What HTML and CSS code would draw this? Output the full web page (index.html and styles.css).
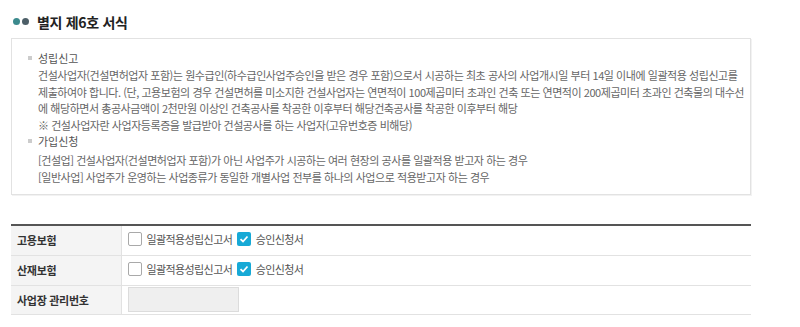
FILE: index.html
```html
<!DOCTYPE html>
<html lang="ko">
<head>
<meta charset="utf-8">
<link rel="stylesheet" href="styles.css">
</head>
<body>
<div class="page">
  <h2 class="title"><span class="dots"><i class="d1"></i><i class="d2"></i></span>별지 제6호 서식</h2>
  <div class="infobox">
    <div class="item">
      <div class="item-head">성립신고</div>
      <p class="item-body">건설사업자(건설면허업자 포함)는 원수급인(하수급인사업주승인을 받은 경우 포함)으로서 시공하는 최초 공사의 사업개시일 부터 14일 이내에 일괄적용 성립신고를<br>제출하여야 합니다. (단, 고용보험의 경우 건설면허를 미소지한 건설사업자는 연면적이 100제곱미터 초과인 건축 또는 연면적이 200제곱미터 초과인 건축물의 대수선<br>에 해당하면서 총공사금액이 2천만원 이상인 건축공사를 착공한 이후부터 해당건축공사를 착공한 이후부터 해당<br>※ 건설사업자란 사업자등록증을 발급받아 건설공사를 하는 사업자(고유번호증 비해당)</p>
    </div>
    <div class="item">
      <div class="item-head">가입신청</div>
      <p class="item-body spaced">[건설업] 건설사업자(건설면허업자 포함)가 아닌 사업주가 시공하는 여러 현장의 공사를 일괄적용 받고자 하는 경우<br>[일반사업] 사업주가 운영하는 사업종류가 동일한 개별사업 전부를 하나의 사업으로 적용받고자 하는 경우</p>
    </div>
  </div>
  <table class="form">
    <tr>
      <th>고용보험</th>
      <td>
        <label class="chk"><span class="box"></span>일괄적용성립신고서</label>
        <label class="chk"><span class="box on"><svg viewBox="0 0 14 14" width="14" height="14"><path d="M3.5 7.2 L6 9.5 L10.5 4.5" fill="none" stroke="#fff" stroke-width="1.8"/></svg></span>승인신청서</label>
      </td>
    </tr>
    <tr>
      <th>산재보험</th>
      <td>
        <label class="chk"><span class="box"></span>일괄적용성립신고서</label>
        <label class="chk"><span class="box on"><svg viewBox="0 0 14 14" width="14" height="14"><path d="M3.5 7.2 L6 9.5 L10.5 4.5" fill="none" stroke="#fff" stroke-width="1.8"/></svg></span>승인신청서</label>
      </td>
    </tr>
    <tr>
      <th>사업장 관리번호</th>
      <td><span class="input"></span></td>
    </tr>
  </table>
</div>
</body>
</html>
```
FILE: styles.css
```css
* { box-sizing: border-box; }
body {
  margin: 0;
  background: #fff;
  font-family: "Noto Sans CJK KR", "Noto Sans", sans-serif;
  color: #666;
}
.page {
  width: 751px;
  padding: 11px 0 0 11px;
}
.title {
  margin: 0 0 6px 0;
  display: flex;
  align-items: center;
  font-size: 14px;
  font-weight: bold;
  color: #222;
  height: 21px;
  letter-spacing: -0.3px;
}
.dots {
  display: flex;
  gap: 2px;
  margin: 0 8px 0 2px;
}
.dots i {
  display: block;
  width: 7px;
  height: 7px;
  border-radius: 50%;
}
.d1 { background: #3b8a8d; }
.d2 { background: #4d5f68; }
.infobox {
  border: 1px solid #e2e2e2;
  box-shadow: 1px 1px 0 #f2f2f2;
  padding: 11px 16px 7px 16px;
  height: 157px;
}
.item-head {
  position: relative;
  padding-left: 10px;
  font-size: 11px;
  line-height: 16px;
  color: #555;
}
.item-head::before {
  content: "";
  position: absolute;
  left: 0;
  top: 6px;
  width: 4px;
  height: 4px;
  background: #ccc;
}
.item-body {
  margin: 1px 0 0 10px;
  font-size: 11px;
  line-height: 16.6px;
  color: #666;
  white-space: nowrap;
  letter-spacing: -0.45px;
}
.item-body.spaced { margin-top: 3px; }
.form {
  margin-top: 29px;
  width: 740px;
  border-collapse: collapse;
  border-top: 2px solid #555;
  font-size: 11px;
}
.form th {
  width: 110px;
  background: #f4f4f4;
  text-align: left;
  padding: 0 0 0 6px;
  height: 30px;
  font-weight: bold;
  color: #333;
  border-bottom: 1px solid #e2e2e2;
  border-right: 1px solid #e2e2e2;
  letter-spacing: -0.3px;
}
.form tr:nth-child(3) th { height: 29px; }
.form td {
  padding: 0 0 0 6px;
  border-bottom: 1px solid #e2e2e2;
  color: #555;
  letter-spacing: -0.6px;
}
.chk {
  display: inline-flex;
  align-items: center;
  margin-right: 2px;
}
.box {
  display: inline-block;
  width: 14px;
  height: 14px;
  border: 1px solid #a9a9a9;
  border-radius: 2px;
  margin-right: 5px;
  background: #fff;
}
.box.on {
  border: none;
  background: #17a9d6;
}
.box svg { display: block; }
.input {
  display: block;
  width: 111px;
  height: 25px;
  background: #efefef;
  border: 1px solid #dcdcdc;
}
```
